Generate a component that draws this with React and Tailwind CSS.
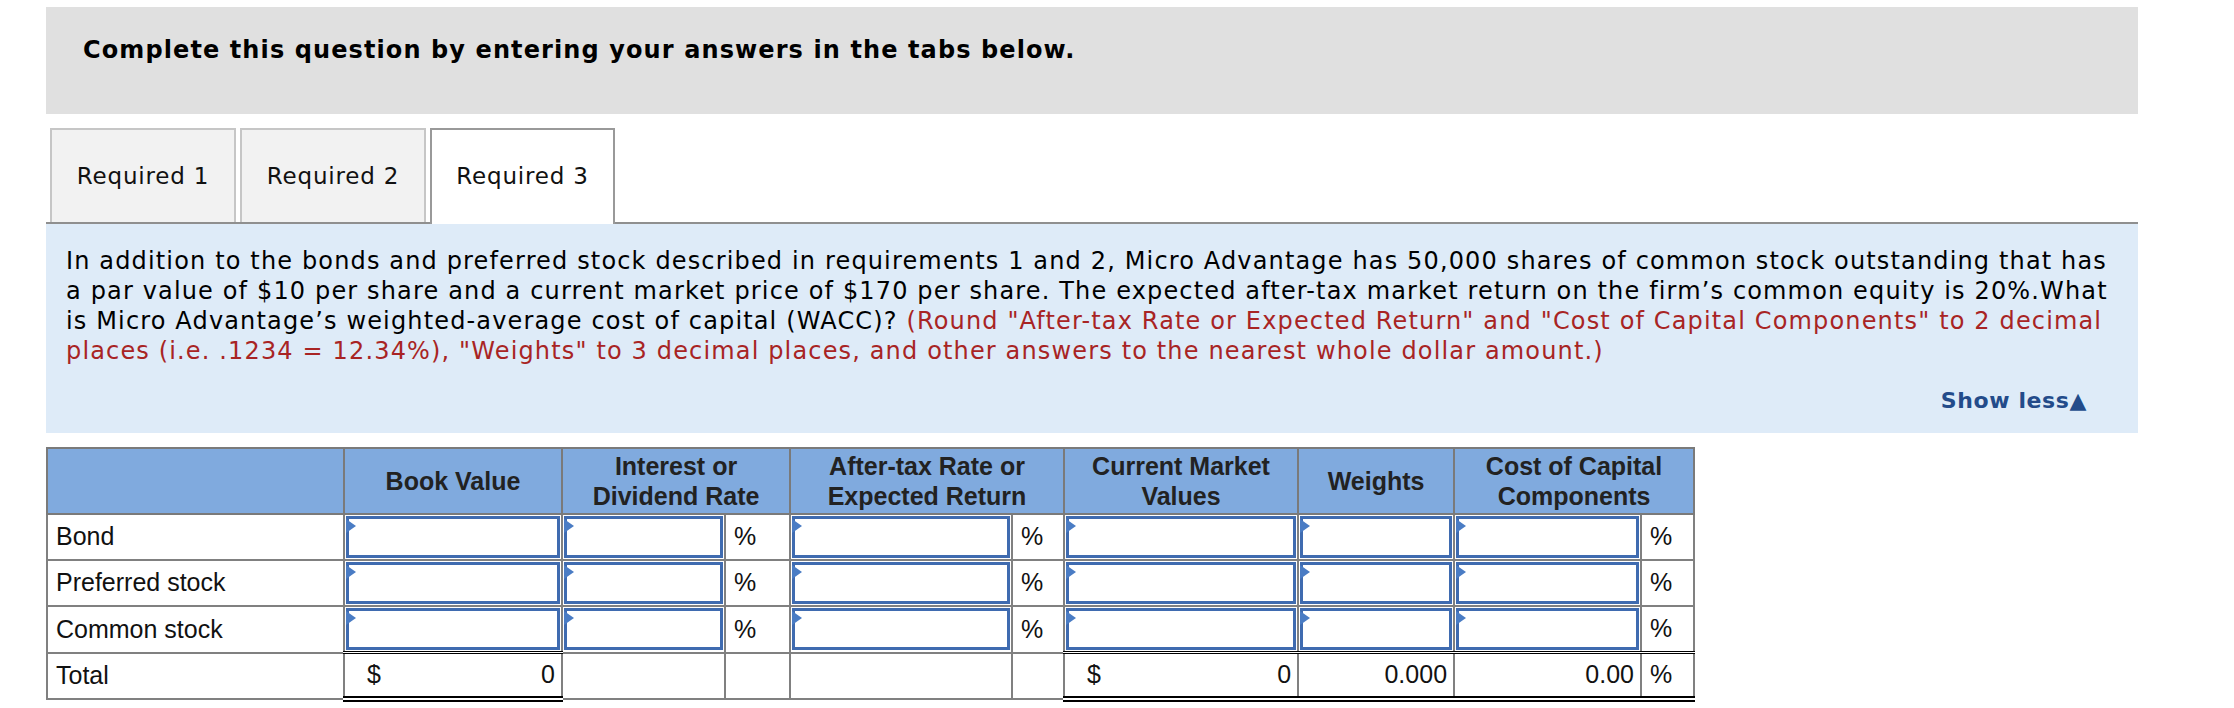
import React from 'react'

const verdana = { fontFamily: '"DejaVu Sans", Verdana, sans-serif' }
const arial = { fontFamily: '"Liberation Sans", Arial, sans-serif' }

const rows = ['Bond', 'Preferred stock', 'Common stock']

function Entry() {
  return (
    <td className="border-2 border-[#808080] p-[1px] align-top">
      <div className="relative h-[42px] border-[3px] border-[#3f6bb0] bg-white">
        <span className="absolute -left-[3px] top-0 h-0 w-0 border-y-[7px] border-l-[10px] border-y-transparent border-l-[#4a7cc4]" />
      </div>
    </td>
  )
}

function Pct({ className = '' }) {
  return <td className={`border-2 border-[#808080] pl-[8px] text-left ${className}`}>%</td>
}

const totalCell = 'border-2 border-[#808080] border-t-[3px] border-t-black border-b-[6px] border-b-black border-double'

export default function App() {
  return (
    <div className="min-h-screen bg-white pl-[46px] pt-[7px]">
      <div className="w-[2092px]">
        <div className="h-[107px] bg-[#e0e0e0] pl-[37px] pt-[28px]" style={verdana}>
          <h2 className="text-[24px] font-bold leading-[30px] tracking-[1.1px] text-black">
            Complete this question by entering your answers in the tabs below.
          </h2>
        </div>

        <div className="mt-[14px] flex items-end gap-[4px] border-b-2 border-[#8f8f8f] pl-[4px]" style={verdana}>
          <div className="flex h-[94px] w-[186px] items-center justify-center border-2 border-b-0 border-[#c6c6c6] bg-[#f2f2f2] text-[23px] tracking-[0.8px] text-[#111]">
            Required 1
          </div>
          <div className="flex h-[94px] w-[186px] items-center justify-center border-2 border-b-0 border-[#c6c6c6] bg-[#f2f2f2] text-[23px] tracking-[0.8px] text-[#111]">
            Required 2
          </div>
          <div className="-mb-[2px] flex h-[96px] w-[185px] items-center justify-center border-2 border-b-0 border-[#999] bg-white pb-[2px] text-[23px] tracking-[0.8px] text-[#111]">
            Required 3
          </div>
        </div>

        <div className="bg-[#deebf8] pb-[17px] pl-[20px] pt-[22px]" style={verdana}>
          <p className="whitespace-nowrap text-[24px] leading-[30px] tracking-[1.15px] text-black">
            In addition to the bonds and preferred stock described in requirements 1 and 2, Micro Advantage has 50,000 shares of common stock outstanding that has
            <br />
            a par value of $10 per share and a current market price of $170 per share. The expected after-tax market return on the firm’s common equity is 20%.What
            <br />
            is Micro Advantage’s weighted-average cost of capital (WACC)?{' '}
            <span className="text-[#a82424]">
              (Round "After-tax Rate or Expected Return" and "Cost of Capital Components" to 2 decimal
              <br />
              places (i.e. .1234 = 12.34%), "Weights" to 3 decimal places, and other answers to the nearest whole dollar amount.)
            </span>
          </p>
          <div className="mt-[20px] flex justify-end pr-[51px]">
            <button className="text-[22px] font-bold leading-[30px] tracking-[0.6px] text-[#234b8a]">Show less▲</button>
          </div>
        </div>

        <div className="mt-[14px]" style={arial}>
          <table className="w-[1647px] table-fixed border-collapse text-[25px] text-[#111]">
            <colgroup>
              <col className="w-[297px]" />
              <col className="w-[218px]" />
              <col className="w-[163px]" />
              <col className="w-[65px]" />
              <col className="w-[222px]" />
              <col className="w-[52px]" />
              <col className="w-[234px]" />
              <col className="w-[156px]" />
              <col className="w-[187px]" />
              <col className="w-[53px]" />
            </colgroup>
            <thead>
              <tr className="h-[66px] bg-[#80aade] text-center font-bold leading-[30px] text-[#222]">
                <th className="border-2 border-[#7a7a7a]" />
                <th className="border-2 border-[#7a7a7a]">Book Value</th>
                <th colSpan={2} className="border-2 border-[#7a7a7a]">
                  Interest or<br />Dividend Rate
                </th>
                <th colSpan={2} className="border-2 border-[#7a7a7a]">
                  After-tax Rate or<br />Expected Return
                </th>
                <th className="border-2 border-[#7a7a7a]">
                  Current Market<br />Values
                </th>
                <th className="border-2 border-[#7a7a7a]">Weights</th>
                <th colSpan={2} className="border-2 border-[#7a7a7a]">
                  Cost of Capital<br />Components
                </th>
              </tr>
            </thead>
            <tbody>
              {rows.map(label => (
                <tr key={label} className="h-[46px]">
                  <td className="border-2 border-[#808080] pl-[8px]">{label}</td>
                  <Entry />
                  <Entry />
                  <Pct />
                  <Entry />
                  <Pct />
                  <Entry />
                  <Entry />
                  <Entry />
                  <Pct />
                </tr>
              ))}
              <tr className="h-[46px]">
                <td className="border-2 border-[#808080] pl-[8px]">Total</td>
                <td className={totalCell}>
                  <div className="flex justify-between pl-[22px] pr-[6px]">
                    <span>$</span>
                    <span>0</span>
                  </div>
                </td>
                <td className="border-2 border-[#808080]" />
                <td className="border-2 border-[#808080]" />
                <td className="border-2 border-[#808080]" />
                <td className="border-2 border-[#808080]" />
                <td className={totalCell}>
                  <div className="flex justify-between pl-[22px] pr-[6px]">
                    <span>$</span>
                    <span>0</span>
                  </div>
                </td>
                <td className={`${totalCell} pr-[6px] text-right`}>0.000</td>
                <td className={`${totalCell} pr-[6px] text-right`}>0.00</td>
                <td className={`${totalCell} pl-[8px] text-left`}>%</td>
              </tr>
            </tbody>
          </table>
        </div>
      </div>
    </div>
  )
}
